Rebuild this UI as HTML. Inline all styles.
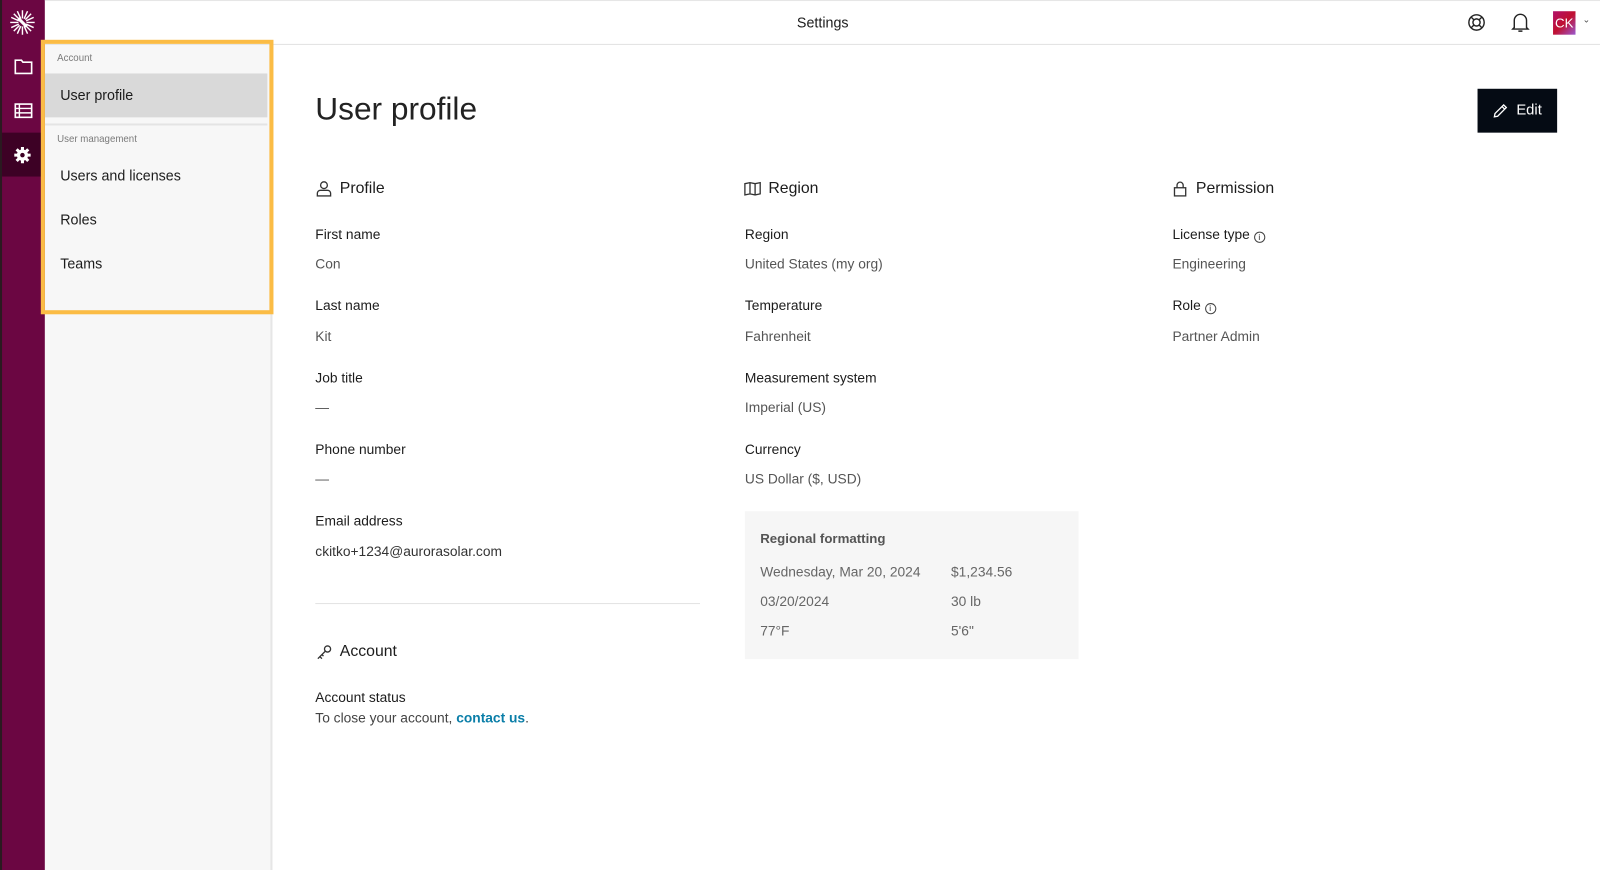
<!DOCTYPE html>
<html><head><meta charset="utf-8"><style>
*{box-sizing:border-box;margin:0;padding:0}
body{width:1600px;height:870px;overflow:hidden;background:#fff;font-family:"Liberation Sans",sans-serif;color:#1c1c1c;position:relative}
#w{position:absolute;left:0;top:0;width:1568px;height:853px;transform:scale(1.0204);transform-origin:0 0}
.abs{position:absolute}
.rail{left:0;top:0;width:44px;height:853px;background:#6b0642;border-left:2px solid #2a1a20}
.top{left:44px;top:0;right:0;height:44px;border-bottom:1px solid #e2e2e2;border-top:1px solid #e6e6e6;background:#fff}
.nav{left:44px;top:44px;width:223px;height:809px;background:#f7f7f7;border-right:2px solid #e6e6e6}
.hl{left:40px;top:39px;width:228px;height:269px;border:4px solid #fbbc45}
.sm{font-size:9.5px;color:#7a7a7a}
.ni{font-size:14px;color:#1c1c1c}
.lab{font-size:13.5px;color:#1c1c1c}
.val{font-size:13.5px;color:#555}
.h{font-size:15.5px;color:#1c1c1c}
svg{display:block}
</style></head><body><div id="w">
<div class="abs rail"></div>
<div class="abs" style="left:2px;top:130px;width:41px;height:43px;background:#3d0125"></div>
<svg class="abs" style="left:9px;top:8px" width="26" height="28" viewBox="0 0 26 28"><g stroke="#fff" stroke-width="1.4">
<line x1="13" y1="2" x2="13" y2="26"/><line x1="1" y1="14" x2="25" y2="14"/><line x1="4.5" y1="5.5" x2="21.5" y2="22.5"/><line x1="21.5" y1="5.5" x2="4.5" y2="22.5"/><line x1="8" y1="3" x2="18" y2="25"/><line x1="18" y1="3" x2="8" y2="25"/><line x1="2" y1="9" x2="24" y2="19"/><line x1="2" y1="19" x2="24" y2="9"/></g><circle cx="13" cy="14" r="4" fill="#6b0642"/><path d="M9 10L17 18" stroke="#fff" stroke-width="3"/></svg>
<svg class="abs" style="left:14px;top:58px" width="18" height="15" viewBox="0 0 18 15"><path d="M1 1h6l1.5 2H17v11H1z" fill="none" stroke="#fff" stroke-width="1.6"/></svg>
<svg class="abs" style="left:14px;top:101px" width="18" height="15" viewBox="0 0 18 15"><rect x="1" y="1" width="16" height="13" fill="none" stroke="#fff" stroke-width="1.6"/><path d="M1 5.3h16M1 9.6h16M5 1v13" stroke="#fff" stroke-width="1.4"/></svg>
<svg class="abs" style="left:13px;top:143px" width="18" height="18" viewBox="0 0 18 18"><circle cx="9" cy="9" r="5.5" fill="#fff"/><g stroke="#fff" stroke-width="3"><path d="M9 1v16M1 9h16M3.3 3.3l11.4 11.4M14.7 3.3L3.3 14.7"/></g><circle cx="9" cy="9" r="2.2" fill="#3d0125"/></svg>
<div class="abs top"></div>
<div class="abs" style="left:781px;top:14px;font-size:14px">Settings</div>
<svg class="abs" style="left:1438px;top:13px" width="18" height="18" viewBox="0 0 18 18" fill="none" stroke="#222" stroke-width="1.4"><circle cx="9" cy="9" r="7.5"/><circle cx="9" cy="9" r="3.5"/><path d="M4 4l2.5 2.5M14 4l-2.5 2.5M4 14l2.5-2.5M14 14l-2.5-2.5"/></svg>
<svg class="abs" style="left:1481px;top:12px" width="18" height="20" viewBox="0 0 18 20" fill="none" stroke="#222" stroke-width="1.4"><path d="M3 15V8a6 6 0 0112 0v7l1.5 1.5h-15z"/><path d="M7 18.5h4"/></svg>
<div class="abs" style="left:1522px;top:11px;width:22px;height:23px;background:linear-gradient(135deg,#b0106a,#c01030 50%,#9a5ad0);color:#fff;font-size:13px;line-height:23px;text-align:center">CK</div>
<div class="abs" style="left:1551px;top:14px;font-size:9px;color:#444">⌄</div>
<div class="abs nav"></div>
<div class="abs" style="left:44px;top:72px;width:218px;height:43px;background:#d9d9d9"></div>
<div class="abs" style="left:44px;top:121px;width:218px;height:2px;background:#e4e4e4"></div>
<div class="abs sm" style="left:56px;top:52px">Account</div>
<div class="abs ni" style="left:59px;top:85px">User profile</div>
<div class="abs sm" style="left:56px;top:131px">User management</div>
<div class="abs ni" style="left:59px;top:164px">Users and licenses</div>
<div class="abs ni" style="left:59px;top:207px">Roles</div>
<div class="abs ni" style="left:59px;top:250px">Teams</div>
<div class="abs hl"></div>
<div class="abs" style="left:309px;top:89px;font-size:31px;color:#222">User profile</div>
<div class="abs" style="left:1448px;top:87px;width:78px;height:43px;background:#050b14;color:#fff;font-size:14.5px;line-height:43px;padding-left:38px">Edit</div>
<svg class="abs" style="left:1463px;top:101px" width="15" height="15" viewBox="0 0 15 15" fill="none" stroke="#fff" stroke-width="1.3"><path d="M1.5 13.5l.6-3.2 8.5-8.5 2.6 2.6-8.5 8.5z M9 3.4l2.6 2.6"/></svg>
<svg class="abs" style="left:310px;top:177px" width="15" height="16" viewBox="0 0 15 16" fill="none" stroke="#333" stroke-width="1.3"><circle cx="7.5" cy="4.5" r="3.3"/><path d="M1 15v-2.5a3 3 0 013-3h7a3 3 0 013 3V15z"/></svg>
<div class="abs h" style="left:333px;top:176px">Profile</div>
<div class="abs lab" style="left:309px;top:222px">First name</div><div class="abs val" style="left:309px;top:251px">Con</div>
<div class="abs lab" style="left:309px;top:292px">Last name</div><div class="abs val" style="left:309px;top:322px">Kit</div>
<div class="abs lab" style="left:309px;top:363px">Job title</div><div class="abs val" style="left:309px;top:392px">—</div>
<div class="abs lab" style="left:309px;top:433px">Phone number</div><div class="abs val" style="left:309px;top:462px">—</div>
<div class="abs lab" style="left:309px;top:503px">Email address</div><div class="abs val" style="left:309px;top:533px;color:#333">ckitko+1234@aurorasolar.com</div>
<div class="abs" style="left:309px;top:591px;width:377px;height:1px;background:#e2e2e2"></div>
<svg class="abs" style="left:310px;top:631px" width="16" height="16" viewBox="0 0 16 16" fill="none" stroke="#333" stroke-width="1.3"><circle cx="11" cy="5" r="3"/><path d="M9 7L1.5 14.5M3.5 12.5l2 2M5.5 10.5l1.5 1.5"/></svg>
<div class="abs h" style="left:333px;top:630px">Account</div>
<div class="abs lab" style="left:309px;top:676px">Account status</div>
<div class="abs" style="left:309px;top:696px;font-size:13.5px;color:#444">To close your account, <b style="color:#0a7ea8">contact us</b>.</div>
<svg class="abs" style="left:729px;top:178px" width="17" height="14" viewBox="0 0 17 14" fill="none" stroke="#333" stroke-width="1.3"><path d="M1 2l5-1 5 1 5-1v11l-5 1-5-1-5 1z M6 1v11M11 2v11"/></svg>
<div class="abs h" style="left:753px;top:176px">Region</div>
<div class="abs lab" style="left:730px;top:222px">Region</div><div class="abs val" style="left:730px;top:251px">United States (my org)</div>
<div class="abs lab" style="left:730px;top:292px">Temperature</div><div class="abs val" style="left:730px;top:322px">Fahrenheit</div>
<div class="abs lab" style="left:730px;top:363px">Measurement system</div><div class="abs val" style="left:730px;top:392px">Imperial (US)</div>
<div class="abs lab" style="left:730px;top:433px">Currency</div><div class="abs val" style="left:730px;top:462px">US Dollar ($, USD)</div>
<div class="abs" style="left:730px;top:501px;width:327px;height:145px;background:#f6f6f6"></div>
<div class="abs" style="left:745px;top:520px;font-size:13px;font-weight:bold;color:#555">Regional formatting</div>
<div class="abs val" style="left:745px;top:553px;color:#666">Wednesday, Mar 20, 2024</div><div class="abs val" style="left:932px;top:553px;color:#666">$1,234.56</div>
<div class="abs val" style="left:745px;top:582px;color:#666">03/20/2024</div><div class="abs val" style="left:932px;top:582px;color:#666">30 lb</div>
<div class="abs val" style="left:745px;top:611px;color:#666">77°F</div><div class="abs val" style="left:932px;top:611px;color:#666">5'6"</div>
<svg class="abs" style="left:1150px;top:177px" width="13" height="16" viewBox="0 0 13 16" fill="none" stroke="#333" stroke-width="1.3"><rect x="1" y="7" width="11" height="8"/><path d="M3.5 7V4.5a3 3 0 016 0V7"/></svg>
<div class="abs h" style="left:1172px;top:176px">Permission</div>
<div class="abs lab" style="left:1149px;top:222px">License type <span style="display:inline-block;width:11px;height:11px;border:1px solid #444;border-radius:50%;font-size:8px;text-align:center;line-height:10px;vertical-align:-1px">i</span></div>
<div class="abs val" style="left:1149px;top:251px">Engineering</div>
<div class="abs lab" style="left:1149px;top:292px">Role <span style="display:inline-block;width:11px;height:11px;border:1px solid #444;border-radius:50%;font-size:8px;text-align:center;line-height:10px;vertical-align:-1px">i</span></div>
<div class="abs val" style="left:1149px;top:322px">Partner Admin</div>
</div></body></html>
